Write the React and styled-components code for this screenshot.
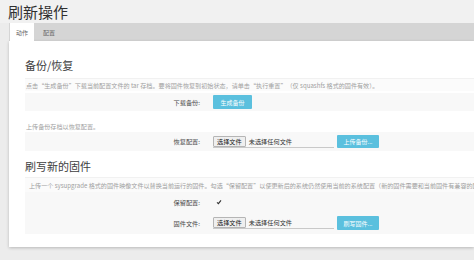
import styled, { createGlobalStyle } from 'styled-components';

const GlobalStyle = createGlobalStyle`
  html, body {
    margin: 0;
    padding: 0;
    background: #ececec;
    font-family: "Noto Sans CJK SC", "Noto Sans", sans-serif;
    overflow: hidden;
  }
`;

const Page = styled.div`
  width: 474px;
  height: 260px;
  overflow: hidden;
`;

const Title = styled.h2`
  margin: 0;
  padding-left: 8px;
  height: 23px;
  font-size: 15px;
  line-height: 23px;
  font-weight: 400;
  color: #303030;
  background: #f1f1f1;
`;

const Main = styled.div`
  margin-left: 9px;
`;

const Tabs = styled.ul`
  display: flex;
  margin: 0;
  padding: 0 0 0 1px;
  height: 18px;
  list-style: none;
  background: #d5d5d5;
`;

const Tab = styled.li`
  display: flex;
  align-items: center;
  padding: 0 ${(p) => (p.active ? '6px' : '9px')};
  font-size: 6px;
  color: #666;
  background: ${(p) => (p.active ? '#fff' : 'transparent')};
`;

const Panel = styled.div`
  background: #fff;
  height: 206px;
  padding: 16px 0 0 16px;
  box-sizing: border-box;
  box-shadow: 0 1px 3px rgba(0, 0, 0, 0.22);
  overflow: hidden;
`;

const Heading = styled.h3`
  margin: ${(p) => p.top || 0}px 0 0;
  height: 16px;
  font-size: 11px;
  line-height: 16px;
  font-weight: 400;
  color: #404040;
`;

const Desc = styled.div`
  margin-top: ${(p) => p.top || 0}px;
  height: ${(p) => p.h || 12}px;
  display: flex;
  align-items: center;
  padding-left: ${(p) => p.indent || 1}px;
  font-size: 6.1px;
  color: #a0a0a0;
  white-space: nowrap;
  background: ${(p) => (p.shaded ? '#fbfbfb' : 'transparent')};
  border-top: ${(p) => (p.shaded ? '1px solid #f1f1f1' : 'none')};
`;

const Row = styled.div`
  display: flex;
  align-items: center;
  height: ${(p) => p.h}px;
  margin-top: ${(p) => p.top || 0}px;
  background: #f8f8f8;
`;

const Label = styled.div`
  width: 175px;
  text-align: right;
  font-size: 6.2px;
  color: #4a4a4a;
`;

const Value = styled.div`
  display: flex;
  align-items: center;
  margin-left: 13px;
  gap: 3px;
`;

const Button = styled.div`
  display: flex;
  align-items: center;
  justify-content: center;
  width: ${(p) => p.w}px;
  height: ${(p) => p.h || 14}px;
  border-radius: 1px;
  background: #5bc0de;
  color: #fff;
  font-size: 6px;
`;

const FileBox = styled.div`
  display: flex;
  align-items: center;
  width: 121px;
  height: 11px;
  border-bottom: 1px solid #c9c9c9;
  font-size: 6.2px;
  color: #333;
`;

const FileButton = styled.span`
  display: flex;
  align-items: center;
  height: 9px;
  padding: 0 3px;
  margin-right: 3px;
  border: 1px solid #b5b5b5;
  border-radius: 1px;
  background: #efefef;
  color: #222;
`;

const Check = styled.div`
  display: flex;
  align-items: center;
  justify-content: center;
  margin-left: 3px;
  width: 6px;
  height: 6px;
`;

const FileInput = () => (
  <FileBox>
    <FileButton>选择文件</FileButton>
    未选择任何文件
  </FileBox>
);

const App = () => (
  <Page>
    <GlobalStyle />
    <Title>刷新操作</Title>
    <Main>
      <Tabs>
        <Tab active>动作</Tab>
        <Tab>配置</Tab>
      </Tabs>
      <Panel>
        <Heading>备份/恢复</Heading>
        <Desc top={5} shaded>
          点击“生成备份”下载当前配置文件的 tar 存档。要将固件恢复到初始状态，请单击“执行重置”（仅 squashfs 格式的固件有效）。
        </Desc>
        <Row h={18} top={2}>
          <Label>下载备份:</Label>
          <Value>
            <Button w={39}>生成备份</Button>
          </Value>
        </Row>
        <Desc top={9}>上传备份存档以恢复配置。</Desc>
        <Row h={19}>
          <Label>恢复配置:</Label>
          <Value>
            <FileInput />
            <Button w={42} h={13}>上传备份...</Button>
          </Value>
        </Row>
        <Heading top={7}>刷写新的固件</Heading>
        <Desc top={3} h={14} indent={4} shaded>
          上传一个 sysupgrade 格式的固件映像文件以替换当前运行的固件。勾选“保留配置”以使更新后的系统仍然使用当前的系统配置（新的固件需要和当前固件有兼容的配置文件）。
        </Desc>
        <Row h={20}>
          <Label>保留配置:</Label>
          <Value>
            <Check>
              <svg width="6" height="6" viewBox="0 0 6 6">
                <path d="M1 3.3 L2.4 4.6 L5 1.3" fill="none" stroke="#333" strokeWidth="1.1" />
              </svg>
            </Check>
          </Value>
        </Row>
        <Row h={22}>
          <Label>固件文件:</Label>
          <Value>
            <FileInput />
            <Button w={42} h={14}>刷写固件...</Button>
          </Value>
        </Row>
      </Panel>
    </Main>
  </Page>
);

export default App;
